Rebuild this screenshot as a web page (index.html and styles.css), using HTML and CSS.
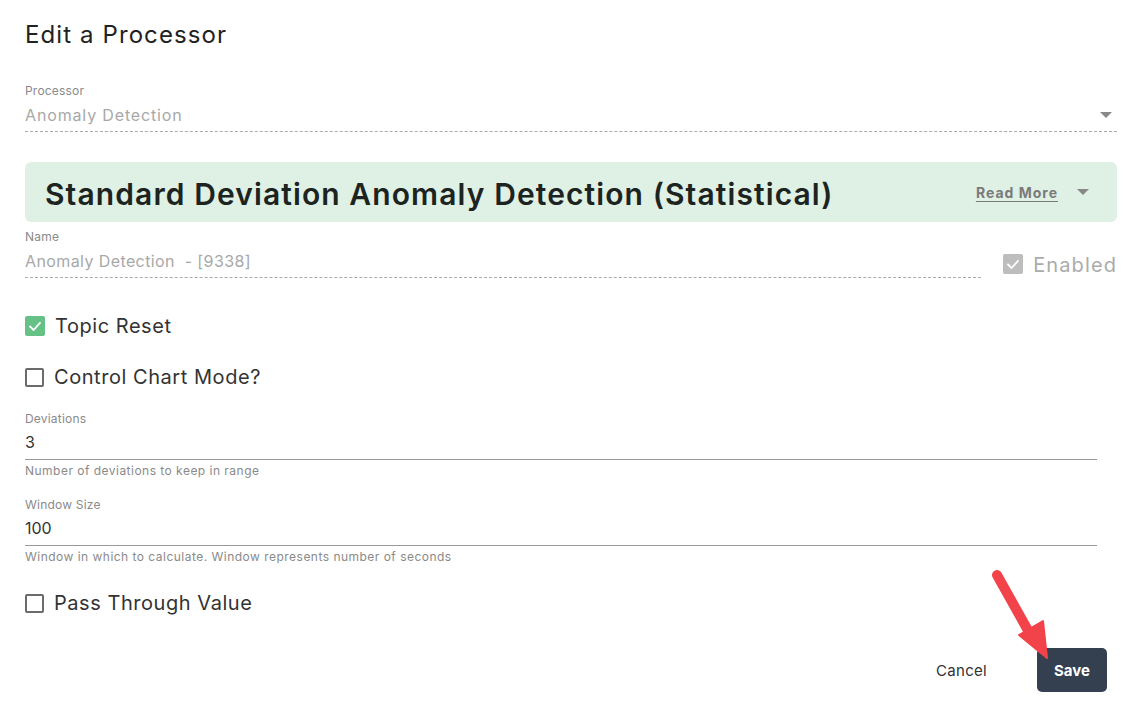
FILE: index.html
```html
<!DOCTYPE html>
<html>
<head>
<meta charset="utf-8">
<link rel="stylesheet" href="styles.css">
</head>
<body>
<div class="page">
  <h1 class="title">Edit a Processor</h1>

  <div class="field select-field">
    <div class="label">Processor</div>
    <div class="value-row">
      <span class="value muted">Anomaly Detection</span>
      <span class="caret"></span>
    </div>
  </div>

  <div class="banner">
    <div class="banner-title">Standard Deviation Anomaly Detection (Statistical)</div>
    <div class="banner-actions">
      <span class="read-more">Read More</span>
      <span class="caret"></span>
    </div>
  </div>

  <div class="name-row">
    <div class="field name-field">
      <div class="label">Name</div>
      <div class="value-row">
        <span class="value muted name-value">Anomaly Detection&nbsp; - [9338]</span>
      </div>
    </div>
    <div class="check disabled">
      <span class="box checked-grey"><svg viewBox="0 0 20 20"><path d="M5 10.5 L8.6 14 L15 6.8" fill="none" stroke="#fff" stroke-width="1.8" stroke-linecap="round" stroke-linejoin="round"/></svg></span>
      <span class="check-label enabled-label">Enabled</span>
    </div>
  </div>

  <div class="check topic">
    <span class="box checked-green"><svg viewBox="0 0 20 20"><path d="M5 10.5 L8.6 14 L15 6.8" fill="none" stroke="#fff" stroke-width="1.8" stroke-linecap="round" stroke-linejoin="round"/></svg></span>
    <span class="check-label">Topic Reset</span>
  </div>

  <div class="check control">
    <span class="box empty"></span>
    <span class="check-label">Control Chart Mode?</span>
  </div>

  <div class="field input-field">
    <div class="label">Deviations</div>
    <div class="input-value">3</div>
    <div class="help">Number of deviations to keep in range</div>
  </div>

  <div class="field input-field">
    <div class="label">Window Size</div>
    <div class="input-value">100</div>
    <div class="help">Window in which to calculate. Window represents number of seconds</div>
  </div>

  <div class="check pass">
    <span class="box empty"></span>
    <span class="check-label">Pass Through Value</span>
  </div>

  <div class="actions">
    <button class="btn-cancel">Cancel</button>
    <button class="btn-save">Save</button>
  </div>

  <svg class="arrow" width="90" height="110" viewBox="0 0 90 110">
    <line x1="17" y1="13" x2="50" y2="72" stroke="#f2424a" stroke-width="10" stroke-linecap="round"/>
    <polygon points="39,73 63,59 67,96" fill="#f2424a" stroke="#f2424a" stroke-width="2" stroke-linejoin="round"/>
  </svg>
</div>
</body>
</html>
```

FILE: styles.css
```css
* { box-sizing: border-box; }
html, body { margin: 0; padding: 0; background: #fff; }
body {
  font-family: Inter, "Open Sans", sans-serif;
  color: #333;
}
.page {
  position: relative;
  width: 1142px;
  height: 704px;
  padding: 20px 25px 0 25px;
}
.title {
  margin: 0;
  font-size: 24px;
  font-weight: 400;
  color: #222;
  line-height: 30px;
  letter-spacing: 1.1px;
}
.field { display: flex; flex-direction: column; }
.label {
  font-size: 12px;
  color: #8a8a8a;
  line-height: 16px;
  letter-spacing: 0.2px;
}
.select-field { margin-top: 33px; }
.value-row {
  display: flex;
  align-items: center;
  justify-content: space-between;
  border-bottom: 1px dashed #aaa;
  padding: 5px 0 5px 0;
}
.value { font-size: 16px; line-height: 22px; letter-spacing: 0.85px; }
.name-value { letter-spacing: 0.4px; }
.muted { color: #a8a8a8; }
.caret {
  width: 0; height: 0;
  border-left: 6px solid transparent;
  border-right: 6px solid transparent;
  border-top: 6px solid #888;
  margin-right: 5px;
}
.banner {
  margin-top: 30px;
  height: 60px;
  background: #dff0e5;
  border-radius: 6px;
  display: flex;
  align-items: center;
  justify-content: space-between;
  padding: 0 28px 0 20px;
}
.banner-title {
  font-size: 30px;
  font-weight: 600;
  color: #1d241f;
  letter-spacing: 1.1px;
  padding-top: 3px;
}
.banner-actions { display: flex; align-items: center; gap: 19px; }
.banner-actions .caret { margin-right: 0; }
.read-more {
  font-size: 14px;
  font-weight: 700;
  color: #7a7a7a;
  letter-spacing: 1px;
  text-decoration: underline;
  text-underline-offset: 3px;
}
.name-row {
  margin-top: 7px;
  display: flex;
  align-items: flex-end;
  gap: 22px;
}
.name-field { flex: 1; }
.check {
  display: flex;
  align-items: center;
  gap: 10px;
}
.box {
  width: 20px; height: 20px;
  border-radius: 2px;
  display: flex;
  align-items: center;
  justify-content: center;
}
.box svg { width: 20px; height: 20px; }
.checked-grey { background: #bdbdbd; }
.checked-green { background: #66c186; }
.empty { border: 2px solid #6b6b6b; width: 19px; height: 19px; }
.check-label { font-size: 20px; color: #333; line-height: 24px; letter-spacing: 0.55px; }
.enabled-label { letter-spacing: 1.1px; padding-top: 2px; }
.disabled .check-label { color: #ababab; }
.disabled { padding-bottom: 1px; }
.topic { margin-top: 36px; }
.control { margin-top: 27px; }
.input-field { margin-top: 22px; width: 1072px; }
.input-field + .input-field { margin-top: 18px; }
.input-value {
  font-size: 16px;
  color: #333;
  line-height: 22px;
  padding-top: 4px;
  height: 33px;
  border-bottom: 1px solid #999;
}
.help {
  font-size: 12px;
  color: #8a8a8a;
  margin-top: 3px;
  line-height: 16px;
  letter-spacing: 0.48px;
}
.pass { margin-top: 26px; }
.actions {
  margin-top: 33px;
  display: flex;
  justify-content: flex-end;
  align-items: center;
  gap: 26px;
  padding-right: 10px;
}
.btn-cancel {
  background: none;
  border: none;
  font-family: inherit;
  font-size: 15px;
  color: #333;
  letter-spacing: 0.3px;
  padding: 0 24px 0 0;
}
.btn-save {
  background: #343f4f;
  color: #fff;
  border: none;
  border-radius: 5px;
  font-family: inherit;
  font-size: 15px;
  font-weight: 700;
  width: 70px;
  height: 44px;
}
.arrow {
  position: absolute;
  left: 980px;
  top: 562px;
}
```
